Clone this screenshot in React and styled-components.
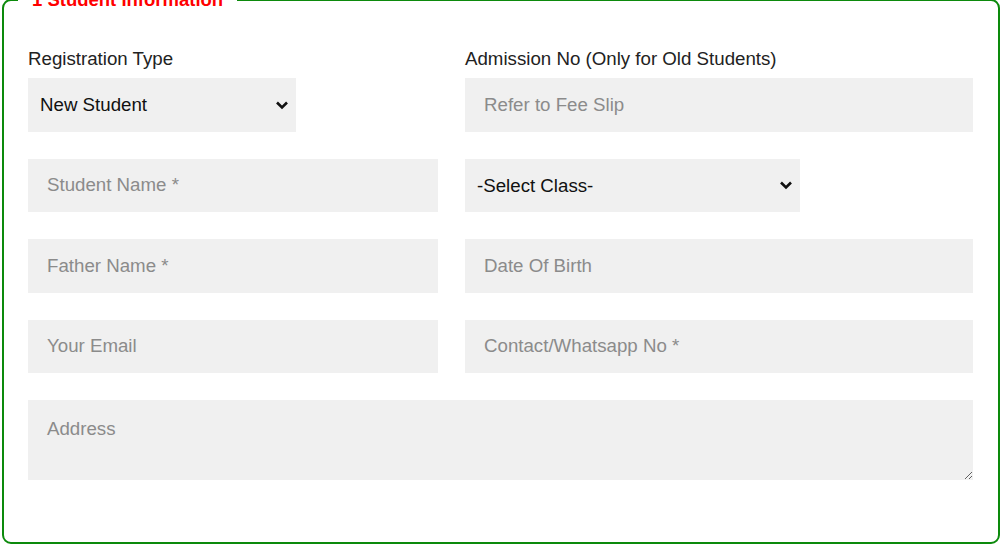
import React from "react";
import styled, { createGlobalStyle } from "styled-components";

const GlobalStyle = createGlobalStyle`
  html, body {
    margin: 0;
    padding: 0;
    background: #fff;
    font-family: "Liberation Sans", Arial, sans-serif;
  }
`;

const Page = styled.div`
  padding: 0 0 0 2px;
  overflow: hidden;
  height: 546px;
`;

const Fieldset = styled.fieldset`
  margin: -11px 0 0 0;
  padding: 37px 25px 62px 24px;
  border: 2px solid #0c8a0c;
  border-radius: 9px;
  min-width: 0;
`;

const Legend = styled.legend`
  margin-left: -10px;
  padding: 0 14px 0 14px;
  color: #ff0000;
  font-weight: 700;
  font-size: 18.5px;
  line-height: 22px;
`;

const Grid = styled.div`
  display: grid;
  grid-template-columns: 410px 1fr;
  column-gap: 27px;
  row-gap: 27px;
`;

const Field = styled.div`
  display: flex;
  flex-direction: column;
  grid-column: ${(p) => (p.$wide ? "1 / -1" : "auto")};
`;

const Label = styled.label`
  font-size: 18.7px;
  line-height: 22px;
  color: #222;
  margin-bottom: 8px;
`;

const Input = styled.input`
  box-sizing: border-box;
  width: 100%;
  height: 53.5px;
  border: none;
  outline: none;
  background: #f0f0f0;
  padding: 0 19px;
  font-family: inherit;
  font-size: 18.7px;
  color: #222;

  &::placeholder {
    color: #8b8b8b;
  }
`;

const SelectWrap = styled.div`
  position: relative;
  width: ${(p) => p.$width};
`;

const Select = styled.select`
  box-sizing: border-box;
  appearance: none;
  width: 100%;
  height: 53.5px;
  border: none;
  outline: none;
  background: #f0f0f0;
  padding: 0 36px 0 12px;
  font-family: inherit;
  font-size: 18.7px;
  color: #111;
`;

const Chevron = styled.svg`
  position: absolute;
  right: 7px;
  top: 50%;
  transform: translateY(-50%);
  pointer-events: none;
`;

const TextArea = styled.textarea`
  box-sizing: border-box;
  width: 100%;
  height: 80px;
  border: none;
  outline: none;
  background: #f0f0f0;
  padding: 18px 19px;
  font-family: inherit;
  font-size: 18.7px;
  line-height: 22px;
  color: #222;
  resize: vertical;

  &::placeholder {
    color: #8b8b8b;
  }
`;

function Dropdown({ width, children, defaultValue }) {
  return (
    <SelectWrap $width={width}>
      <Select defaultValue={defaultValue}>{children}</Select>
      <Chevron width="14" height="10" viewBox="0 0 14 10">
        <path
          d="M2 2.5 L7 7.5 L12 2.5"
          fill="none"
          stroke="#111"
          strokeWidth="2.6"
        />
      </Chevron>
    </SelectWrap>
  );
}

export default function App() {
  return (
    <Page>
      <GlobalStyle />
      <Fieldset>
        <Legend>1 Student Information</Legend>
        <Grid>
          <Field>
            <Label>Registration Type</Label>
            <Dropdown width="65.4%" defaultValue="new">
              <option value="new">New Student</option>
              <option value="old">Old Student</option>
            </Dropdown>
          </Field>
          <Field>
            <Label>Admission No (Only for Old Students)</Label>
            <Input placeholder="Refer to Fee Slip" />
          </Field>
          <Field>
            <Input placeholder="Student Name *" />
          </Field>
          <Field>
            <Dropdown width="66%" defaultValue="">
              <option value="">-Select Class-</option>
              <option value="1">Class 1</option>
            </Dropdown>
          </Field>
          <Field>
            <Input placeholder="Father Name *" />
          </Field>
          <Field>
            <Input placeholder="Date Of Birth" />
          </Field>
          <Field>
            <Input placeholder="Your Email" />
          </Field>
          <Field>
            <Input placeholder="Contact/Whatsapp No *" />
          </Field>
          <Field $wide>
            <TextArea placeholder="Address" />
          </Field>
        </Grid>
      </Fieldset>
    </Page>
  );
}
